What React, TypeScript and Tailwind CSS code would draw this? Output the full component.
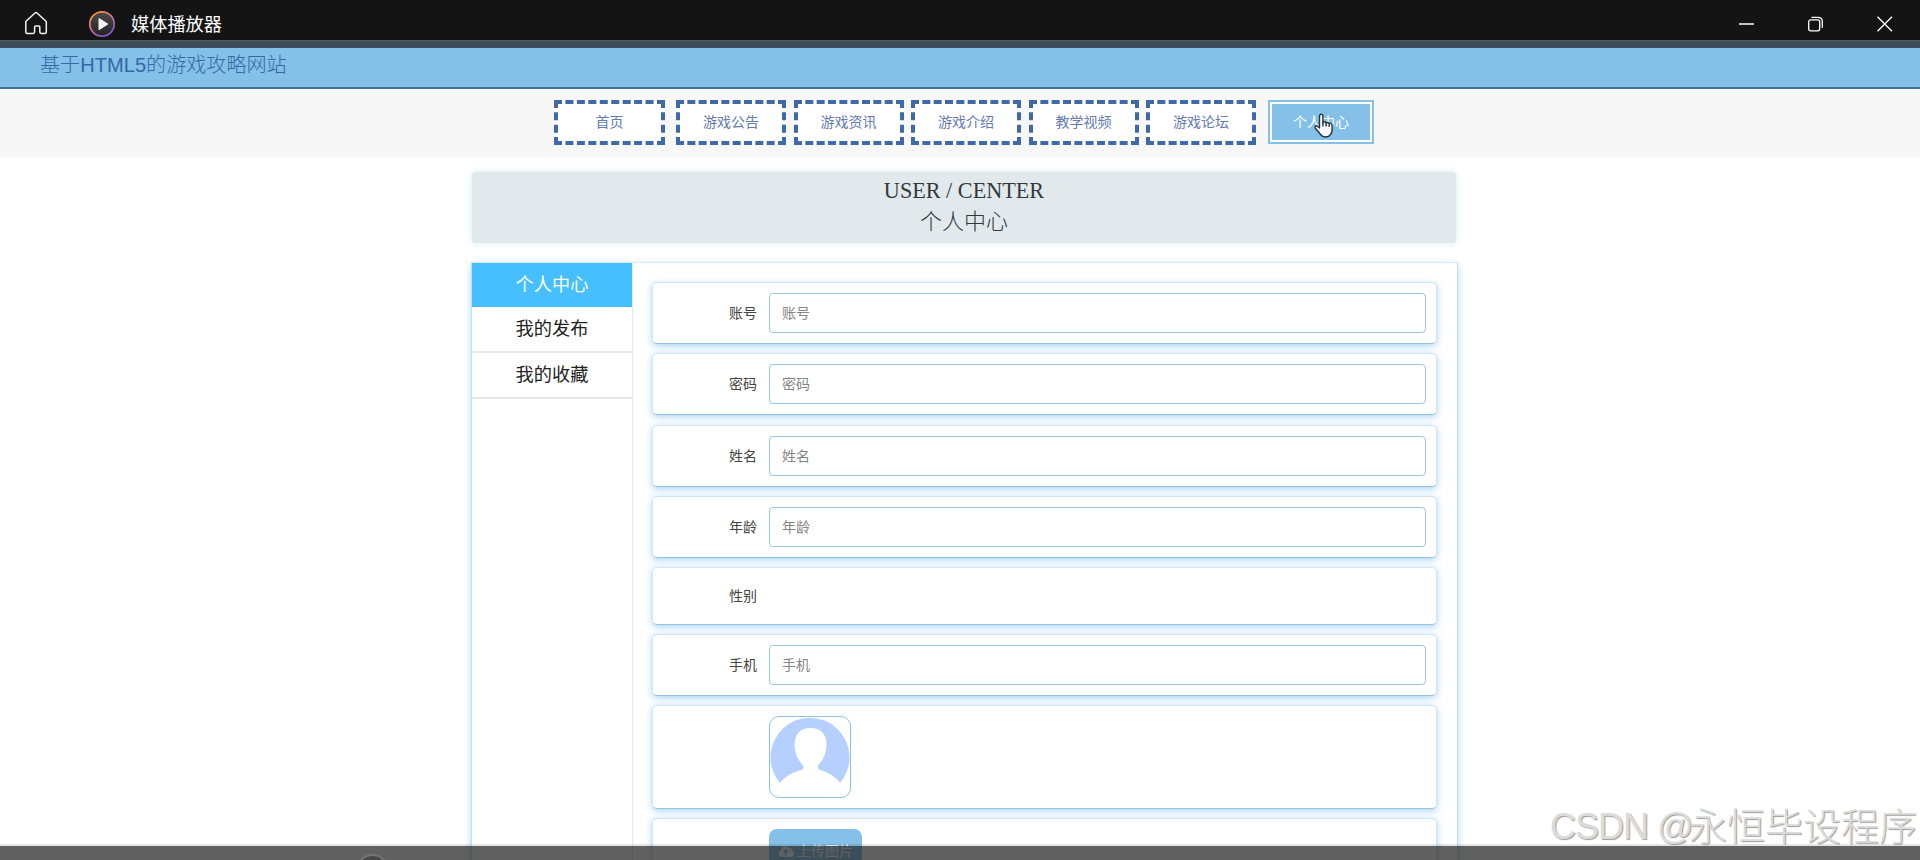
import React from "react";
import { FaCloudUploadAlt } from "react-icons/fa";

const navItems = [
  "首页",
  "游戏公告",
  "游戏资讯",
  "游戏介绍",
  "教学视频",
  "游戏论坛",
];

const sideItems = ["我的发布", "我的收藏"];

const rowClass =
  "flex w-[785px] shrink-0 items-center rounded-[5px] border border-[#d3e4ef] border-b-[#93c3de] bg-white shadow-[0_2px_7px_rgba(110,185,240,0.6)]";

function TitleBar() {
  return (
    <div className="flex h-10 shrink-0 items-center bg-[#141414] pt-[7px] text-white">
      <svg
        className="ml-6 mt-[-1px]"
        width="24"
        height="24"
        viewBox="0 0 24 24"
        fill="none"
        stroke="#f2f2f2"
        strokeWidth="1.5"
        strokeLinejoin="round"
      >
        <path d="M2 10.2 11 2q1-.9 2 0l9 8.200q.3.300.3.800V21q0 1.500-1.500 1.500h-3.600q-1.400 0-1.400-1.400V16q0-1-1-1h-3.200q-1 0-1 1v5.100q0 1.400-1.400 1.400H3.300Q1.800 22.500 1.800 21V11q0-.5.2-.8z" />
      </svg>
      <svg className="ml-[40px]" width="28" height="28" viewBox="0 0 28 28">
        <defs>
          <linearGradient id="ring" x1="0" y1="0" x2="0.6" y2="1">
            <stop offset="0.15" stopColor="#f9913d" />
            <stop offset="0.55" stopColor="#c4708f" />
            <stop offset="1" stopColor="#7f56c8" />
          </linearGradient>
          <linearGradient id="disc" x1="0" y1="0" x2="0" y2="1">
            <stop offset="0" stopColor="#4a4a4a" />
            <stop offset="1" stopColor="#242424" />
          </linearGradient>
        </defs>
        <circle cx="14" cy="14" r="12.200" fill="url(#disc)" stroke="url(#ring)" strokeWidth="1.800" />
        <path d="M11 8.500v11.200l8.800-5.600z" fill="#f5f5f5" stroke="#f5f5f5" strokeLinejoin="round" />
      </svg>
      <span className="ml-[15px] mt-[2px] text-[18.200px] font-normal leading-6">媒体播放器</span>
      <div className="ml-auto flex items-center pr-[27px]">
        <svg width="154" height="16" viewBox="0 0 154 16" fill="none" stroke="#fff" strokeWidth="1.300">
          <path d="M0 8h15" strokeWidth="1.500" />
          <rect x="69.700" y="3.800" width="11" height="11" rx="2" />
          <path d="M72.500 1.300h6.500q4.300 0 4.300 4.300v6.200" />
          <path d="M138.500.8l14.500 14.500M153 .8l-14.500 14.500" />
        </svg>
      </div>
    </div>
  );
}

function Pointer() {
  return (
    <svg
      className="absolute left-[44px] top-[11px]"
      width="20"
      height="26"
      viewBox="0 0 20 26"
      fill="#fff"
      stroke="#26313b"
      strokeWidth="1.400"
      strokeLinejoin="round"
    >
      <path d="M5.500 15V3q0-1.800 1.700-1.800T8.900 3v7q.3-1.300 1.700-1.200 1.500.1 1.500 1.700.4-1.200 1.700-1 1.400.2 1.400 1.700.5-1 1.600-.8 1.300.3 1.300 1.900v4.500q0 3-1.600 4.700Q15 24 11.500 24q-3.200 0-4.900-2.500L1.400 15.200q-.9-1.500.3-2.200 1-.5 2 .5z" />
      <path d="M8.900 9.500v4M12.100 10.500v3M15.200 11.500v2.500" fill="none" />
    </svg>
  );
}

function Nav() {
  return (
    <div className="flex h-[68px] shrink-0 bg-[#f8f7f8] pl-[554px] pt-[11px] text-[14px] text-[#647ab0]">
      {navItems.map((item, i) => (
        <div
          key={item}
          className={
            i === 0
              ? "mr-[11px] flex h-[45px] w-[111px] items-center justify-center border-4 border-dashed border-[#4069a8] bg-white"
              : "mr-[7.500px] flex h-[45px] w-[110px] items-center justify-center border-4 border-dashed border-[#4069a8] bg-white"
          }
        >
          {item}
        </div>
      ))}
      <div className="relative ml-[4.500px] h-[44px] w-[106px] border-2 border-[#84c0e7] bg-white p-[2px] text-white">
        <div className="flex h-full items-center justify-center bg-[#84c0e7]">
          个人中心
        </div>
        <Pointer />
      </div>
    </div>
  );
}

function Field({ label, className }: { label: string; className: string }) {
  return (
    <div className={`${rowClass} ${className}`}>
      <label className="w-[104px] text-right text-[14px] text-[#444]">{label}</label>
      <input
        className="ml-[12px] h-10 w-[657px] rounded-[4px] border border-[#9cc6e0] bg-white px-[12px] text-[14px] placeholder:text-[#858585]"
        placeholder={label}
      />
    </div>
  );
}

function Avatar() {
  return (
    <svg width="80" height="80" viewBox="0 0 80 80">
      <path d="M10 66A39.500 39.500 0 1 1 70 66Q64 57 49 52.500 46.500 50 49 47 56 40 56.500 28 56 11 40.500 11 25 11 24.500 28 25 40 32 47q2.500 3 .5 5.500Q16 57 10 66z" fill="#b5d0ff" />
    </svg>
  );
}

function Center() {
  return (
    <div className="ml-[471px] flex h-[640px] w-[987px] shrink-0 border border-[#dbeaf0] border-x-[#bfe0f0] bg-white shadow-[0_3px_7px_rgba(120,190,240,0.6)]">
      <div className="w-[161px] shrink-0 border-r border-[#dcebf3] text-center text-[18.200px] text-[#222]">
        <div className="h-[44px] bg-[#45bfff] leading-[44px] text-white">个人中心</div>
        {sideItems.map((item) => (
          <div key={item} className="h-[46px] border-b-2 border-[#e3e9ee] leading-[44px]">
            {item}
          </div>
        ))}
      </div>
      <div className="flex flex-col pl-[19px] pt-[19px]">
        <Field label="账号" className="mb-[9px] h-[62px]" />
        <Field label="密码" className="mb-[10px] h-[62px]" />
        <Field label="姓名" className="mb-[9px] h-[62px]" />
        <Field label="年龄" className="mb-[9px] h-[62px]" />
        <div className={`${rowClass} mb-[9px] h-[58px]`}>
          <label className="w-[104px] text-right text-[14px] text-[#444]">性别</label>
        </div>
        <Field label="手机" className="mb-[9px] h-[62px]" />
        <div className={`${rowClass} mb-[9px] h-[104px] pl-[116px]`}>
          <div className="h-[82px] w-[82px] overflow-hidden rounded-[10px] border border-[#8fc0e2]">
            <Avatar />
          </div>
        </div>
        <div className={`${rowClass} h-[62px] pl-[116px]`}>
          <div className="flex h-10 w-[93px] items-center gap-[3px] rounded-[8px] bg-[#84c0e7] pl-[10px] pt-[4px] text-[14px] text-white">
            <FaCloudUploadAlt size={15} />
            上传图片
          </div>
        </div>
      </div>
    </div>
  );
}

export default function App() {
  return (
    <div className="relative flex h-[860px] w-[1920px] flex-col overflow-hidden bg-white font-['Liberation_Sans','Noto_Sans_CJK_SC',sans-serif]">
      <TitleBar />
      <div className="h-2 shrink-0 border-t border-[#555a5c] bg-[#3d4d5a]" />
      <div className="h-[41px] shrink-0 border-b-2 border-[#4170a0] bg-[#84c0e7] pl-10 text-[20.100px] font-light leading-[35px] text-[#3568a6]">
        基于<span className="font-normal">HTML5</span>的游戏攻略网站
      </div>
      <Nav />
      {/* page heading */}
      <div className="mb-[19px] ml-[472px] mt-[15px] h-[71px] w-[984px] shrink-0 rounded-[3px] bg-[#e1e9ec] pt-[3px] text-center font-['Liberation_Serif','Noto_Sans_CJK_SC',serif] text-[22px] leading-[31px] text-[#33383b] shadow-[0_0_6px_rgba(170,215,240,0.5)]">
        <div className="text-[22.200px]">USER / CENTER</div>
        <div className="font-light">个人中心</div>
      </div>
      <Center />

      {/* player controls sliding in over the page */}
      <div className="absolute inset-x-0 bottom-0 h-4 border-t-2 border-black/10">
        <div className="h-[14px] overflow-hidden bg-[#1e1e1e]/70 pl-[356px]">
          <div className="mt-[8px] h-[33px] w-[33px] rounded-full border-2 border-[#737373] bg-[#484848]" />
        </div>
      </div>
      <div className="absolute left-[1550px] top-[803px] flex items-center whitespace-nowrap leading-[48px] text-[#dcdcdc] [text-shadow:1px_1px_1px_#9a9a9a]">
        <span className="w-[139px] text-[36px] tracking-[-1px]">CSDN @</span>
        <span className="text-[38px] font-light">永恒毕设程序</span>
      </div>
    </div>
  );
}
